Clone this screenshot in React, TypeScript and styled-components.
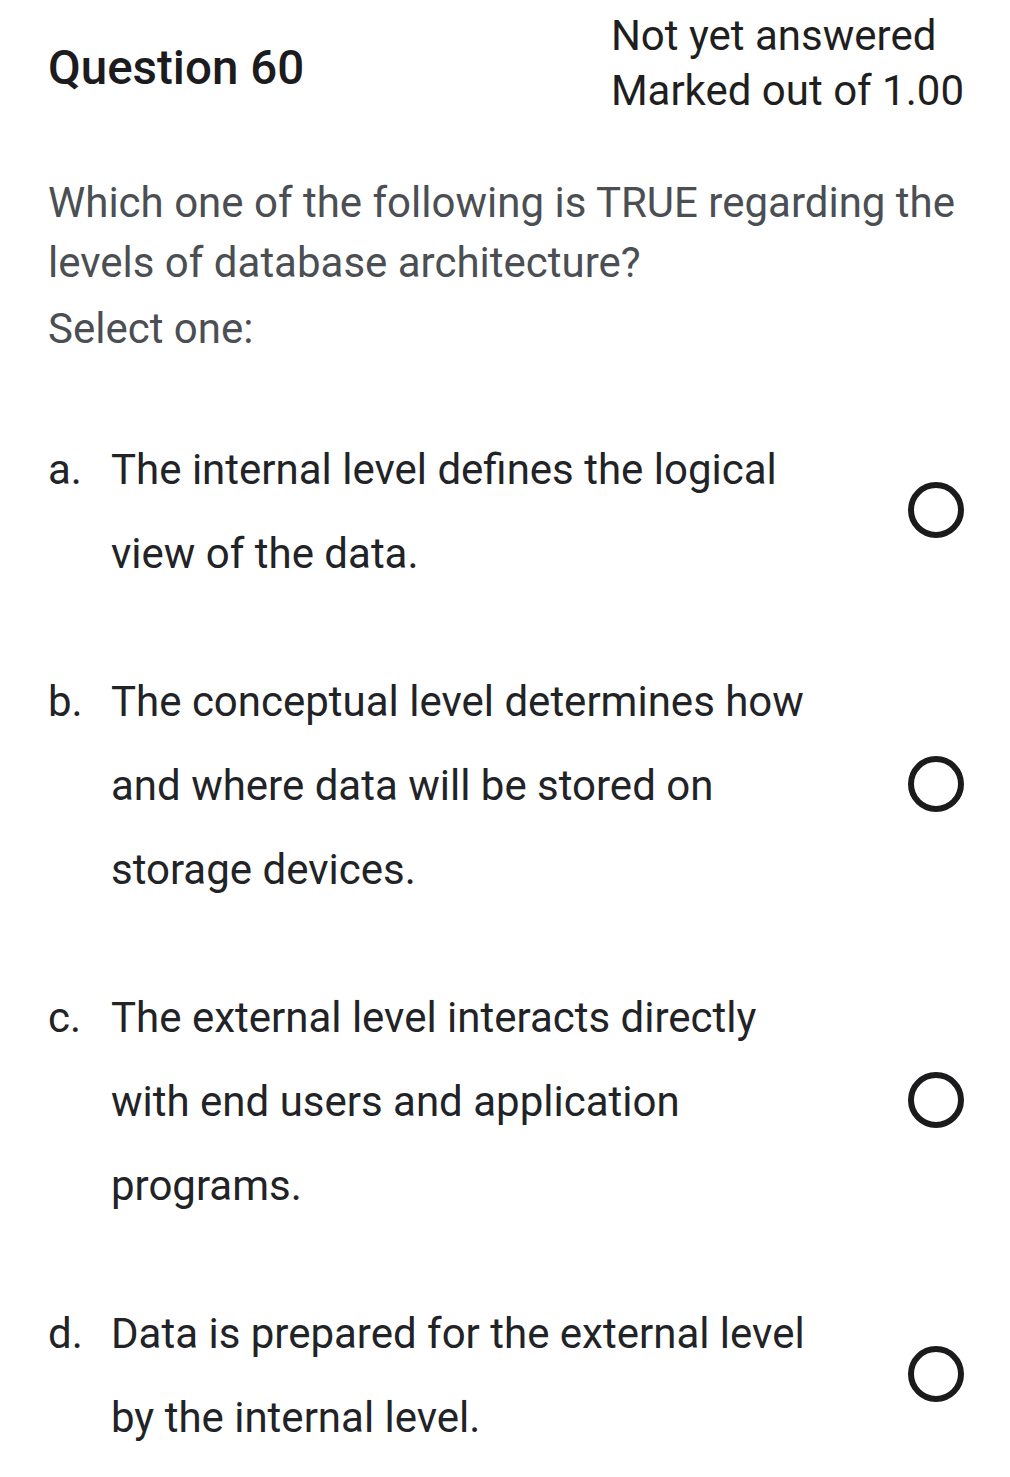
import React from "react";
import styled, { createGlobalStyle } from "styled-components";

const Global = createGlobalStyle`
  html, body { margin: 0; padding: 0; background: #ffffff; }
  body { font-family: Roboto, "Noto Sans", Arial, sans-serif; -webkit-font-smoothing: antialiased; }
`;

const Page = styled.div`
  width: 1010px;
  min-height: 1477px;
  box-sizing: border-box;
  padding: 8px 46px 0 48px;
  background: #fff;
`;

const Header = styled.div`
  display: flex;
  justify-content: space-between;
  align-items: center;
`;

const Title = styled.h2`
  margin: 0;
  padding-top: 10px;
  font-size: 47.5px;
  font-weight: 500;
  color: #1c1c1e;
`;

const Meta = styled.div`
  font-size: 42px;
  line-height: 55px;
  color: #1f1f21;
`;

const QText = styled.div`
  margin-top: 55px;
  font-size: 42px;
  line-height: 60px;
  color: #4b4f54;
`;

const Prompt = styled.div`
  margin-top: 6px;
  font-size: 42px;
  line-height: 60px;
  color: #4b4f54;
`;

const Options = styled.div`
  margin-top: 69px;
  display: flex;
  flex-direction: column;
  gap: 64px;
`;

const Option = styled.label`
  display: flex;
  align-items: center;
  font-size: 42px;
  line-height: 84px;
  color: #222326;
`;

const Letter = styled.span`
  width: 63px;
  flex: none;
  align-self: flex-start;
`;

const OptText = styled.span`
  flex: 1;
  padding-right: 20px;
`;

const Radio = styled.span`
  flex: none;
  width: 44px;
  height: 44px;
  margin-top: -4px;
  border: 6.5px solid #1b1b1d;
  border-radius: 50%;
`;

const options = [
  { l: "a.", t: ["The internal level defines the logical", "view of the data."] },
  { l: "b.", t: ["The conceptual level determines how", "and where data will be stored on", "storage devices."] },
  { l: "c.", t: ["The external level interacts directly", "with end users and application", "programs."] },
  { l: "d.", t: ["Data is prepared for the external level", "by the internal level."] },
];

export default function App() {
  return (
    <>
      <Global />
      <Page>
        <Header>
          <Title>Question 60</Title>
          <Meta>
            <div>Not yet answered</div>
            <div>Marked out of 1.00</div>
          </Meta>
        </Header>
        <QText>
          Which one of the following is TRUE regarding the
          <br />
          levels of database architecture?
        </QText>
        <Prompt>Select one:</Prompt>
        <Options>
          {options.map((o) => (
            <Option key={o.l}>
              <Letter>{o.l}</Letter>
              <OptText>
                {o.t.map((line, i) => (
                  <div key={i}>{line}</div>
                ))}
              </OptText>
              <Radio />
            </Option>
          ))}
        </Options>
      </Page>
    </>
  );
}
